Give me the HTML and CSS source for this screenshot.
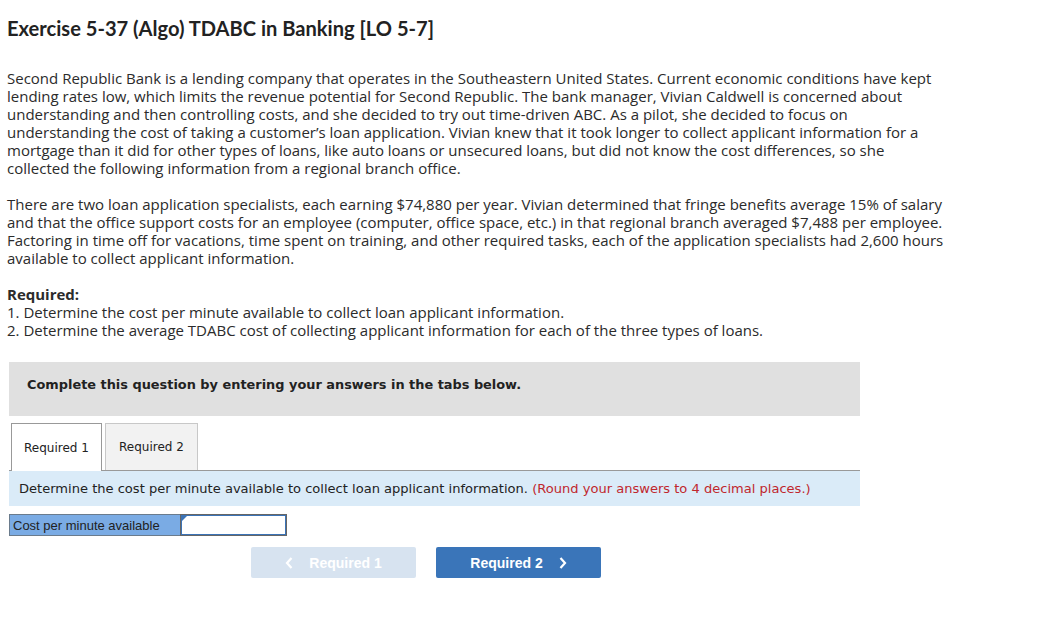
FILE: index.html
```html
<!DOCTYPE html>
<html>
<head>
<meta charset="utf-8">
<link rel="stylesheet" href="styles.css">
</head>
<body>
<div class="page">
  <h1 class="title">Exercise 5-37 (Algo) TDABC in Banking [LO 5-7]</h1>
  <p class="para">Second Republic Bank is a lending company that operates in the Southeastern United States. Current economic conditions have kept lending rates low, which limits the revenue potential for Second Republic. The bank manager, Vivian Caldwell is concerned about understanding and then controlling costs, and she decided to try out time-driven ABC. As a pilot, she decided to focus on understanding the cost of taking a customer’s loan application. Vivian knew that it took longer to collect applicant information for a mortgage than it did for other types of loans, like auto loans or unsecured loans, but did not know the cost differences, so she collected the following information from a regional branch office.</p>
  <p class="para">There are two loan application specialists, each earning $74,880 per year. Vivian determined that fringe benefits average 15% of salary and that the office support costs for an employee (computer, office space, etc.) in that regional branch averaged $7,488 per employee. Factoring in time off for vacations, time spent on training, and other required tasks, each of the application specialists had 2,600 hours available to collect applicant information.</p>
  <div class="para required">
    <div class="req-head">Required:</div>
    <div>1. Determine the cost per minute available to collect loan applicant information.</div>
    <div>2. Determine the average TDABC cost of collecting applicant information for each of the three types of loans.</div>
  </div>

  <div class="question">
    <div class="notice">Complete this question by entering your answers in the tabs below.</div>
    <div class="tabs">
      <div class="tab active">Required 1</div>
      <div class="tab">Required 2</div>
    </div>
    <div class="instruction">Determine the cost per minute available to collect loan applicant information. <span class="hint">(Round your answers to 4 decimal places.)</span></div>
    <div class="answer-row">
      <div class="answer-label">Cost per minute available</div>
      <div class="answer-input"><span class="corner"></span></div>
    </div>
    <div class="nav">
      <div class="btn btn-prev"><svg class="chev left" viewBox="0 0 8 12" width="8" height="12"><path d="M6.5 1 L2 6 L6.5 11" fill="none" stroke="#fff" stroke-width="2.2"/></svg>Required 1</div>
      <div class="btn btn-next">Required 2<svg class="chev right" viewBox="0 0 8 12" width="8" height="12"><path d="M1.5 1 L6 6 L1.5 11" fill="none" stroke="#fff" stroke-width="2.2"/></svg></div>
    </div>
  </div>
</div>
</body>
</html>
```

FILE: styles.css
```css
html, body {
  margin: 0;
  padding: 0;
  background: #fff;
}
.page {
  padding: 15px 0 0 7px;
  width: 939px;
  font-family: "Open Sans", "Liberation Sans", sans-serif;
  color: #2b2b2b;
}
.title {
  margin: 0;
  font-family: "Lato", "Liberation Sans", sans-serif;
  font-size: 20.1px;
  line-height: 26px;
  font-weight: 700;
  color: #222;
}
.para {
  margin: 0;
  font-size: 15px;
  line-height: 18px;
}
.title + .para {
  margin-top: 28px;
}
.para + .para {
  margin-top: 18px;
}
.req-head {
  font-weight: 700;
}
.question {
  margin-top: 23px;
  margin-left: 2px;
  width: 851px;
}
.notice {
  background: #e0e0e0;
  height: 54px;
  box-sizing: border-box;
  padding: 15px 0 0 18px;
  font-family: "DejaVu Sans", Verdana, sans-serif;
  font-size: 12.9px;
  font-weight: 700;
  color: #222;
}
.tabs {
  margin-top: 7px;
  display: flex;
  gap: 3px;
  padding-left: 2px;
  border-bottom: 1px solid #999;
  height: 47px;
}
.tab {
  height: 47px;
  box-sizing: border-box;
  width: 93px;
  border: 1px solid #c8c8c8;
  border-bottom: none;
  background: #f2f2f2;
  font-family: "DejaVu Sans", Verdana, sans-serif;
  font-size: 12px;
  color: #222;
  display: flex;
  align-items: center;
  justify-content: center;
}
.tab.active {
  width: 91px;
  background: #fff;
  border-color: #999;
  height: 48px;
  position: relative;
  z-index: 1;
}
.instruction {
  background: #daebf8;
  height: 35px;
  display: flex;
  align-items: center;
  padding-left: 10px;
  font-family: "DejaVu Sans", Verdana, sans-serif;
  font-size: 13.05px;
  color: #222;
  white-space: pre;
}
.hint {
  color: #c0272d;
}
.answer-row {
  margin-top: 8px;
  display: flex;
  height: 22px;
}
.answer-label {
  width: 171px;
  box-sizing: border-box;
  background: #7aabe4;
  border: 1px solid #6a7b8c;
  border-right: none;
  font-family: "Liberation Sans", Arial, sans-serif;
  font-size: 13px;
  color: #222;
  display: flex;
  align-items: center;
  padding-left: 3px;
}
.answer-input {
  width: 107px;
  box-sizing: border-box;
  border: 1px solid #666;
  box-shadow: inset 0 0 0 1px #3b73b6;
  background: #fff;
  position: relative;
}
.corner {
  position: absolute;
  left: 1px;
  top: 1px;
  width: 0;
  height: 0;
  border-top: 5px solid #3b73b6;
  border-right: 5px solid transparent;
}
.nav {
  margin-top: 11px;
  display: flex;
  gap: 20px;
  padding-left: 242px;
}
.btn {
  width: 165px;
  height: 31px;
  border-radius: 2px;
  display: flex;
  align-items: center;
  justify-content: center;
  font-family: "Liberation Sans", Arial, sans-serif;
  font-weight: 700;
  font-size: 14px;
  color: #fff;
}
.btn-prev {
  background: #d7e3f0;
}
.btn-next {
  background: #3a75b9;
}
.chev.left { margin-right: 16px; }
.chev.right { margin-left: 16px; }
```
